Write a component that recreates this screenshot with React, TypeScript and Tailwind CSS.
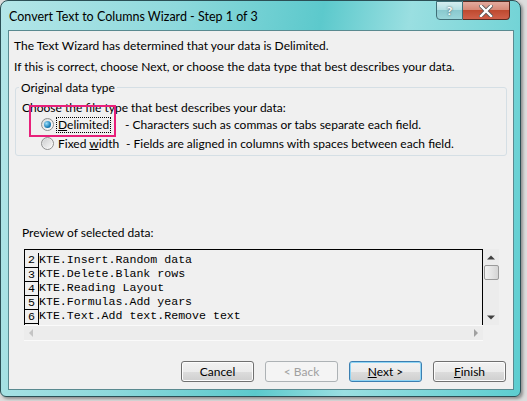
const ui = { fontFamily: 'Lato, "Noto Sans", sans-serif' }
const mono = { fontFamily: '"Liberation Mono", "Courier New", monospace' }

const rows = [
    { n: '2', text: 'KTE.Insert.Random data' },
    { n: '3', text: 'KTE.Delete.Blank rows' },
    { n: '4', text: 'KTE.Reading Layout' },
    { n: '5', text: 'KTE.Formulas.Add years' },
    { n: '6', text: 'KTE.Text.Add text.Remove text' },
]

function Radio({ checked }: { checked?: boolean }) {
    return (
        <div className="w-[13px] h-[13px] rounded-full border border-[#8e8f8f] bg-gradient-to-br from-[#d9dadb] to-[#ffffff] flex items-center justify-center shrink-0">
            {checked ? (
                <div className="w-[7px] h-[7px] rounded-full bg-[radial-gradient(circle_at_35%_35%,#9fe0fb,#1d80b8_60%,#0c4f7c)]" />
            ) : (
                <div className="w-[9px] h-[9px] rounded-full bg-gradient-to-br from-[#cfd0d1] to-[#f7f7f7]" />
            )}
        </div>
    )
}

function WinButton({ children, primary, disabled }: { children: React.ReactNode; primary?: boolean; disabled?: boolean }) {
    const base = 'w-[73px] h-[21px] rounded-[3px] border text-[12px] flex items-center justify-center'
    if (disabled) {
        return <div className={`${base} border-[#adb2b5] bg-[#f4f4f4] text-[#a0a0a0]`}>{children}</div>
    }
    return (
        <div
            className={`${base} ${primary ? 'border-[#3c7fb1] shadow-[inset_0_0_0_1px_#8fd5f5]' : 'border-[#707070] shadow-[inset_0_0_0_1px_#fcfcfc]'} bg-[linear-gradient(#f2f2f2_0%,#ebebeb_50%,#dddddd_50%,#cfcfcf_100%)] text-black`}
        >
            {children}
        </div>
    )
}

export default function App() {
    return (
        <div className="w-[527px] h-[401px] bg-[#dcdcdc] overflow-hidden" style={ui}>
            <div className="w-[521px] h-[397px] rounded-t-[8px] rounded-b-[6px] border border-[#2b4f55] bg-[linear-gradient(100deg,#b4e6e8_0%,#8ed9dc_30%,#5cc9cc_55%,#9adfe1_70%,#5ccdd0_100%)] flex flex-col shadow-[2px_2px_3px_rgba(0,0,0,0.35)]">
                <div className="h-[29px] flex items-start shrink-0 relative">
                    <div className="pl-[8px] pt-[7px] text-[12.5px] text-black">Convert Text to Columns Wizard - Step 1 of 3</div>
                    <div className="absolute right-[10px] top-0 flex">
                        <div className="w-[27px] h-[19px] rounded-bl-[4px] border border-[#3f6f77] bg-[linear-gradient(#d6eef0_0%,#b3dfe3_45%,#8ac9cf_50%,#9ad6da_100%)] flex items-center justify-center text-[12px] font-bold text-white [text-shadow:0_0_2px_#333]">
                            ?
                        </div>
                        <div className="w-[47px] h-[19px] rounded-br-[4px] border border-l-0 border-[#5a2a20] bg-[linear-gradient(#e2ab9f_0%,#d78a78_45%,#bf4a30_50%,#d0604a_100%)] flex items-center justify-center">
                            <svg width="14" height="12" viewBox="0 0 14 12">
                                <path d="M2 1 L12 11 M12 1 L2 11" stroke="#555" strokeWidth="4" strokeLinecap="square" />
                                <path d="M2 1 L12 11 M12 1 L2 11" stroke="#fff" strokeWidth="2.4" strokeLinecap="square" />
                            </svg>
                        </div>
                    </div>
                </div>
                <div className="flex-1 ml-[7px] mr-[6px] mb-[6px] border border-[#5a8a90] bg-[#f0f0f0] flex flex-col text-[12px] text-black">
                    <div className="pl-[5px] pt-[7px] leading-[15px]">The Text Wizard has determined that your data is Delimited.</div>
                    <div className="pl-[5px] mt-[6px] leading-[15px]">If this is correct, choose Next, or choose the data type that best describes your data.</div>

                    <fieldset className="mx-[6px] mt-[6px] border border-[#d5dfe5] rounded-[3px] px-[6px] pb-[2px]">
                        <legend className="px-[2px] ml-[-3px] leading-[15px]">Original data type</legend>
                        <div className="leading-[15px] mt-[5px]">Choose the file type that best describes your data:</div>
                        <div className="flex items-center h-[19px] relative">
                            <div className="absolute left-[7px] top-[-10px] w-[87px] h-[32px] border-2 border-[#e8207a]" />
                            <div className="w-[103px] flex items-center pl-[19px] shrink-0">
                                <Radio checked />
                                <span className="ml-[3px] outline outline-1 outline-dotted outline-black px-[1px] leading-[14px]">
                                    <u>D</u>elimited
                                </span>
                            </div>
                            <span>- Characters such as commas or tabs separate each field.</span>
                        </div>
                        <div className="flex items-center h-[19px]">
                            <div className="w-[104px] flex items-center pl-[19px] shrink-0">
                                <Radio />
                                <span className="ml-[4px]">
                                    Fixed <u>w</u>idth
                                </span>
                            </div>
                            <span>- Fields are aligned in columns with spaces between each field.</span>
                        </div>
                    </fieldset>

                    <div className="mt-[69px] pl-[13px] leading-[15px]">Preview of selected data:</div>

                    <div className="ml-[15px] mt-[9px] flex">
                        <div className="flex flex-col">
                            <div className="w-[459px] h-[76px] border-t border-l border-r border-black overflow-hidden pt-[3px]" style={mono}>
                                {rows.map((r, i) => (
                                    <div key={r.n} className="flex h-[14px] text-[11.6px] leading-[14px]">
                                        <div className={`w-[14px] border-r border-black ${i === 0 ? '' : 'border-t'} text-center`}>{r.n}</div>
                                        <div className="whitespace-pre">{r.text}</div>
                                    </div>
                                ))}
                                <div className="flex h-[14px]">
                                    <div className="w-[14px] border-r border-t border-black" />
                                </div>
                            </div>
                            <div className="w-[459px] h-[16px] bg-[#ececec] border-t border-b border-[#fafafa] flex items-center justify-between px-[5px]">
                                <svg width="5" height="8" viewBox="0 0 5 8">
                                    <path d="M4 0 L0 4 L4 8 Z" fill="#c4c4c4" />
                                </svg>
                                <svg width="5" height="8" viewBox="0 0 5 8">
                                    <path d="M1 0 L5 4 L1 8 Z" fill="#a0a0a0" />
                                </svg>
                            </div>
                        </div>
                        <div className="w-[16px] h-[76px] bg-[#ececec] flex flex-col items-center">
                            <div className="h-[16px] flex items-center justify-center">
                                <svg width="8" height="5" viewBox="0 0 8 5">
                                    <path d="M0 4.5 L4 0.5 L8 4.5 Z" fill="#404040" />
                                </svg>
                            </div>
                            <div className="w-[15px] h-[15px] rounded-[2px] border border-[#9a9a9a] bg-[linear-gradient(90deg,#f3f3f3,#e4e4e4_50%,#d4d4d4)]" />
                            <div className="flex-1" />
                            <div className="h-[16px] flex items-center justify-center">
                                <svg width="8" height="5" viewBox="0 0 8 5">
                                    <path d="M0 0.5 L4 4.5 L8 0.5 Z" fill="#404040" />
                                </svg>
                            </div>
                        </div>
                    </div>

                    <div className="flex justify-end gap-[11px] pr-[7px] mt-[20px]">
                        <WinButton>Cancel</WinButton>
                        <WinButton disabled>&lt; Back</WinButton>
                        <WinButton primary>
                            <span>
                                <u>N</u>ext &gt;
                            </span>
                        </WinButton>
                        <WinButton>
                            <span>
                                <u>F</u>inish
                            </span>
                        </WinButton>
                    </div>
                </div>
            </div>
        </div>
    )
}
